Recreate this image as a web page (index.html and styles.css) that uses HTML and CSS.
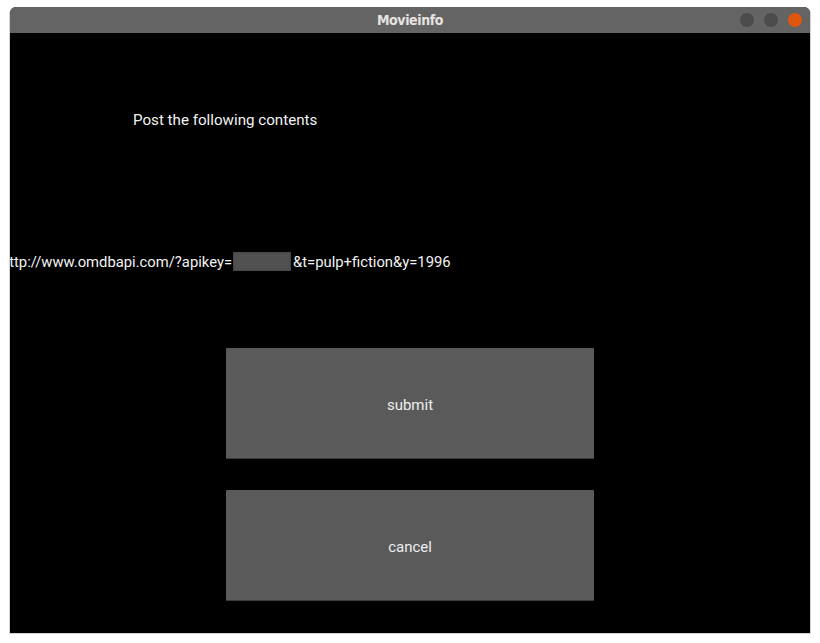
FILE: index.html
```html
<!DOCTYPE html>
<html>
<head>
<meta charset="utf-8">
<title>Movieinfo</title>
<link rel="stylesheet" href="styles.css">
</head>
<body>
<div class="window">
  <div class="titlebar">
    <span class="title">Movieinfo</span>
    <div class="controls">
      <span class="dot"></span>
      <span class="dot"></span>
      <span class="dot close"></span>
    </div>
  </div>
  <div class="content">
    <div class="label post">Post the following contents</div>
    <div class="label url">http://www.omdbapi.com/?apikey=<span class="blur"></span>&amp;t=pulp+fiction&amp;y=1996</div>
    <div class="btn submit">submit</div>
    <div class="btn cancel">cancel</div>
  </div>
</div>
</body>
</html>
```

FILE: styles.css
```css
html, body {
  margin: 0;
  padding: 0;
  background: #ffffff;
}
body {
  width: 820px;
  height: 643px;
  overflow: hidden;
}
.window {
  margin: 7px 0 0 9px;
  width: 800px;
  border: 1px solid #d4d4d4;
  border-top: none;
  border-radius: 7px 7px 0 0;
  background: #000;
}
.titlebar {
  position: relative;
  height: 26px;
  background: #646464;
  border-radius: 6px 6px 0 0;
  display: flex;
  align-items: center;
  justify-content: center;
}
.title {
  font-family: "DejaVu Sans Condensed", "DejaVu Sans", sans-serif;
  font-weight: bold;
  font-size: 14px;
  letter-spacing: -0.4px;
  color: #e6e4e0;
}
.controls {
  position: absolute;
  right: 8px;
  top: 6px;
  display: flex;
  gap: 10px;
}
.dot {
  width: 14px;
  height: 14px;
  border-radius: 50%;
  background: #4b4b4b;
}
.dot.close {
  background: #e0560e;
}
.content {
  height: 600px;
  overflow: hidden;
  font-family: Roboto, "Liberation Sans", sans-serif;
  font-size: 15px;
  color: #f2f2f2;
}
.label {
  height: 20px;
  line-height: 20px;
  white-space: nowrap;
}
.post {
  margin-top: 77px;
  padding-left: 123px;
  font-size: 15.15px;
}
.url {
  margin-top: 122px;
  margin-left: -9px;
  font-size: 14.8px;
}
.blur {
  display: inline-block;
  vertical-align: top;
  width: 58px;
  height: 19px;
  margin: 0 2px 0 1px;
  background: #515151;
  box-shadow: inset 0 0 3px #3a3a3a;
}
.btn {
  margin-left: 216px;
  width: 368px;
  height: 110px;
  padding-top: 4px;
  box-sizing: border-box;
  background: #5a5a5a;
  border-bottom: 1px solid #3c3c3c;
  border-radius: 1px;
  display: flex;
  align-items: center;
  justify-content: center;
  color: #eeeeee;
}
.submit {
  margin-top: 76px;
  height: 111px;
}
.cancel {
  margin-top: 31px;
  height: 111px;
}
```
